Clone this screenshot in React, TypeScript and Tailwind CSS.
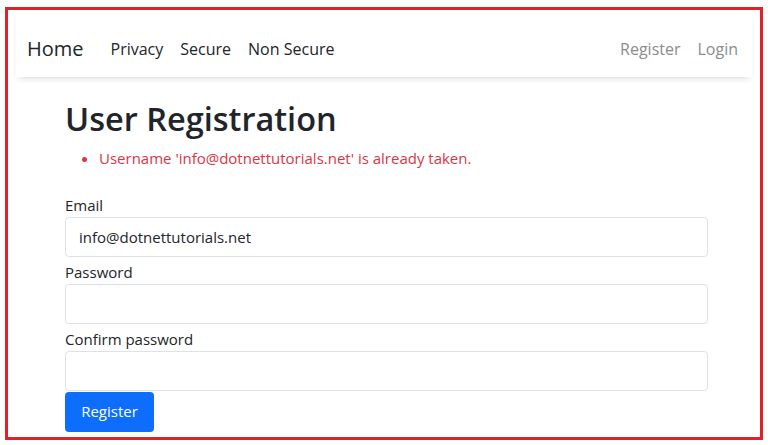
export default function App() {
  return (
    <div className="h-[445px] w-[768px] overflow-hidden bg-white p-[5px] pt-[7px] font-['Open_Sans',sans-serif] text-[#212529]">
      <div className="h-full w-full border-[3px] border-[#e0202a] pl-[8px] pr-[8px]">
        <nav className="flex h-[67px] items-center bg-white pl-[11px] pr-[14px] pt-[10px] shadow-[0_4px_6px_-2px_rgba(0,0,0,0.12)]">
          <span className="mr-[27px] text-[20px]">Home</span>
          <div className="flex gap-[17px] text-[16px]">
            <span>Privacy</span>
            <span>Secure</span>
            <span>Non Secure</span>
          </div>
          <div className="ml-auto flex gap-[17px] text-[16px] text-[#8c8c8c]">
            <span>Register</span>
            <span>Login</span>
          </div>
        </nav>
        <main className="pl-[49px] pr-[44px]">
          <h1 className="mt-[18px] text-[32.5px] font-semibold leading-[48px]">User Registration</h1>
          <ul className="mt-[4px] list-disc pl-[34px] text-[15px] text-[#dc3545]">
            <li>Username 'info@dotnettutorials.net' is already taken.</li>
          </ul>
          <form className="mt-[23px] flex flex-col text-[15px]">
            <label className="leading-[24px]">Email</label>
            <input
              className="h-[40px] rounded-[4px] border border-[#dee2e6] px-[13px] text-[#212529]"
              defaultValue="info@dotnettutorials.net"
            />
            <label className="mt-[3px] leading-[24px]">Password</label>
            <input type="password" className="h-[40px] rounded-[4px] border border-[#dee2e6] px-[13px]" />
            <label className="mt-[3px] leading-[24px]">Confirm password</label>
            <input type="password" className="h-[40px] rounded-[4px] border border-[#dee2e6] px-[13px]" />
            <button type="button" className="mt-[1px] h-[40px] w-[89px] rounded-[4px] bg-[#0d6efd] text-white">
              Register
            </button>
          </form>
        </main>
      </div>
    </div>
  );
}
